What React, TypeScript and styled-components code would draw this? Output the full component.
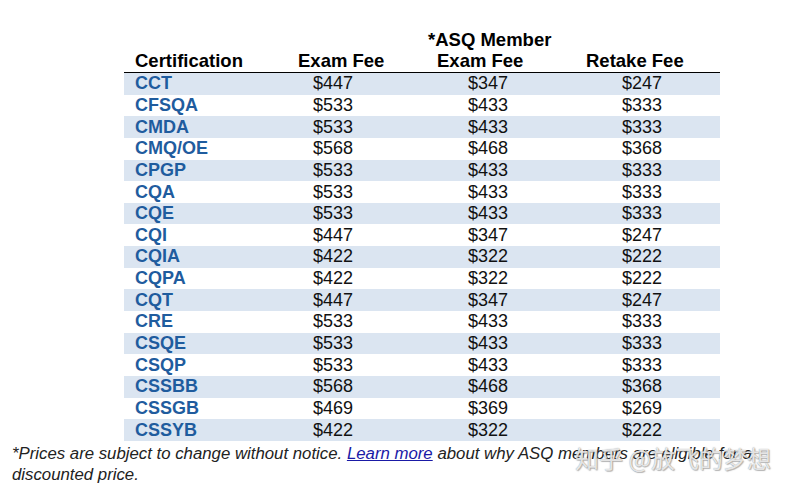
import React from 'react';
import styled, { createGlobalStyle } from 'styled-components';

const GlobalStyle = createGlobalStyle`
  html, body {
    margin: 0;
    padding: 0;
    background: #ffffff;
  }
  body {
    font-family: "Liberation Sans", Arial, sans-serif;
  }
`;

type Fee = { code: string; exam: number; member: number; retake: number };

const fees: Fee[] = [
  { code: 'CCT', exam: 447, member: 347, retake: 247 },
  { code: 'CFSQA', exam: 533, member: 433, retake: 333 },
  { code: 'CMDA', exam: 533, member: 433, retake: 333 },
  { code: 'CMQ/OE', exam: 568, member: 468, retake: 368 },
  { code: 'CPGP', exam: 533, member: 433, retake: 333 },
  { code: 'CQA', exam: 533, member: 433, retake: 333 },
  { code: 'CQE', exam: 533, member: 433, retake: 333 },
  { code: 'CQI', exam: 447, member: 347, retake: 247 },
  { code: 'CQIA', exam: 422, member: 322, retake: 222 },
  { code: 'CQPA', exam: 422, member: 322, retake: 222 },
  { code: 'CQT', exam: 447, member: 347, retake: 247 },
  { code: 'CRE', exam: 533, member: 433, retake: 333 },
  { code: 'CSQE', exam: 533, member: 433, retake: 333 },
  { code: 'CSQP', exam: 533, member: 433, retake: 333 },
  { code: 'CSSBB', exam: 568, member: 468, retake: 368 },
  { code: 'CSSGB', exam: 469, member: 369, retake: 269 },
  { code: 'CSSYB', exam: 422, member: 322, retake: 222 },
];

export default function App() {
  return (
    <Page>
      <GlobalStyle />
      <Table>
        <HeadRow>
          <HeadCell pad={11}>Certification</HeadCell>
          <HeadCell pad={0}>Exam Fee</HeadCell>
          <HeadCell pad={0}>
            *ASQ Member
            <br />
            <Indent>Exam Fee</Indent>
          </HeadCell>
          <HeadCell pad={0}>Retake Fee</HeadCell>
        </HeadRow>
        {fees.map((f, i) => (
          <Row key={f.code} shaded={i % 2 === 0}>
            <Code>{f.code}</Code>
            <Price pad={15}>${f.exam}</Price>
            <Price pad={40}>${f.member}</Price>
            <Price pad={36}>${f.retake}</Price>
          </Row>
        ))}
      </Table>
      <Note>
        *Prices are subject to change without notice. <NoteLink href="#">Learn more</NoteLink> about why ASQ members are eligible for a
        discounted price.
        <Watermark>知乎 @放飞的梦想</Watermark>
      </Note>
    </Page>
  );
}

const Page = styled.div`
  width: 793px;
  height: 492px;
  padding-top: 29px;
  box-sizing: border-box;
  overflow: hidden;
`;

const Table = styled.div`
  margin-left: 124px;
  width: 596px;
`;

const columns = '174px 130px 158px 134px';

const HeadRow = styled.div`
  display: grid;
  grid-template-columns: ${columns};
  align-items: end;
  border-bottom: 1px solid #000;
  padding-bottom: 1px;
`;

const HeadCell = styled.div<{ pad: number }>`
  padding-left: ${(p) => p.pad}px;
  font-size: 18.5px;
  font-weight: bold;
  line-height: 21px;
  color: #000;
  white-space: nowrap;
`;

const Indent = styled.span`
  padding-left: 9px;
`;

const Row = styled.div<{ shaded: boolean }>`
  display: grid;
  grid-template-columns: ${columns};
  align-items: center;
  height: 21.65px;
  background: ${(p) => (p.shaded ? '#dbe5f1' : '#ffffff')};
`;

const Code = styled.div`
  padding-left: 11px;
  font-size: 18px;
  font-weight: bold;
  color: #1f5c9e;
  line-height: 21px;
`;

const Price = styled.div<{ pad: number }>`
  padding-left: ${(p) => p.pad}px;
  font-size: 18px;
  color: #111;
  line-height: 21px;
`;

const Note = styled.p`
  position: relative;
  margin: 2px 0 0;
  padding-left: 12px;
  width: 770px;
  font-size: 16.8px;
  font-style: italic;
  line-height: 21px;
  color: #222;
`;

const NoteLink = styled.a`
  color: #1a1aa6;
  text-decoration: underline;
`;

const Watermark = styled.span`
  position: absolute;
  left: 575px;
  top: 2px;
  font-family: "Noto Sans CJK SC", "Liberation Sans", sans-serif;
  font-style: normal;
  font-size: 24px;
  line-height: 26px;
  white-space: nowrap;
  color: rgba(255, 255, 255, 0.8);
  text-shadow: 0 0 1px rgba(90, 90, 90, 0.7), 1px 1px 1px rgba(120, 120, 120, 0.5);
  pointer-events: none;
`;
